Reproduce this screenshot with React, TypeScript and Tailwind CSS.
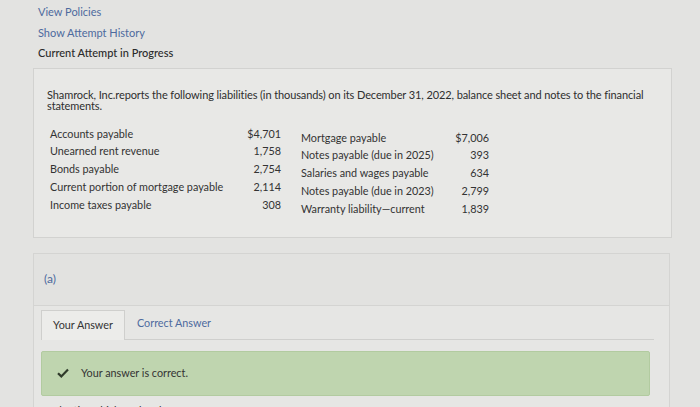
import React from 'react';

const left = [
  ['Accounts payable', '$4,701'],
  ['Unearned rent revenue', '1,758'],
  ['Bonds payable', '2,754'],
  ['Current portion of mortgage payable', '2,114'],
  ['Income taxes payable', '308'],
];

const right = [
  ['Mortgage payable', '$7,006'],
  ['Notes payable (due in 2025)', '393'],
  ['Salaries and wages payable', '634'],
  ['Notes payable (due in 2023)', '2,799'],
  ['Warranty liability\u2014current', '1,839'],
];

export default function App() {
  return (
    <div
      className="w-[700px] h-[407px] overflow-hidden bg-[#e3e3e1] text-[#3a3a3a]"
      style={{ fontFamily: 'Lato, "Open Sans", sans-serif' }}
    >
      <div className="pl-[38px] pt-[2px] text-[11px] leading-[20.5px]">
        <div className="text-[#4d6a9e]">View Policies</div>
        <div className="text-[#4d6a9e]">Show Attempt History</div>
        <div className="text-[#2a2a2a] font-medium">Current Attempt in Progress</div>
      </div>

      <div className="ml-[33px] mr-[28px] mt-[4px] h-[170px] border border-[#d2d2d0] bg-[#e8e8e6] px-[13px] pt-[20px]">
        <p className="text-[11px] leading-[11px] text-[#2e2e2e] tracking-[-0.1px]">
          Shamrock, Inc.reports the following liabilities (in thousands) on its December 31, 2022, balance sheet and notes to the financial statements.
        </p>
        <div className="flex mt-[14px] pl-[3px] text-[10.8px] leading-[17.8px] text-[#333]">
          <div className="w-[181px]">
            {left.map(([l]) => <div key={l}>{l}</div>)}
          </div>
          <div className="w-[50px] text-right">
            {left.map(([l, v]) => <div key={l}>{v}</div>)}
          </div>
          <div className="w-[152px] pl-[20px] pt-[4px]">
            {right.map(([l]) => <div key={l} className="whitespace-nowrap">{l}</div>)}
          </div>
          <div className="w-[56px] text-right pt-[4px]">
            {right.map(([l, v]) => <div key={l}>{v}</div>)}
          </div>
        </div>
      </div>

      <div className="ml-[33px] mr-[30px] mt-[15px] border border-[#d4d4d2] bg-[#e6e6e4]">
        <div className="h-[52px] flex items-center pl-[10px] border-b border-[#d4d4d2] bg-[#e2e2e0]">
          <span className="text-[12px] text-[#4d6a9e]">(a)</span>
        </div>
        <div className="px-[7px] pt-[3px]">
          <div className="flex items-end border-b border-[#cfcfcd] mr-[8px]">
            <div className="w-[84px] h-[30px] flex items-center justify-center border border-b-0 border-[#cfcfcd] bg-[#ececea] text-[10.8px] text-[#333] -mb-px">
              Your Answer
            </div>
            <div className="h-[30px] flex items-center pl-[12px] text-[10.8px] text-[#4d6a9e]">
              Correct Answer
            </div>
          </div>
          <div className="mt-[11px] mr-[12px] h-[45px] bg-[#bfd5af] border border-[#b2cba0] rounded-[2px] flex items-center pl-[15px]">
            <svg width="12" height="10" viewBox="0 0 12 10" className="mr-[12px]">
              <path d="M1 5.2 L4.3 8.4 L11 1.6" fill="none" stroke="#2f3a2a" strokeWidth="2.2" />
            </svg>
            <span className="text-[10.8px] text-[#333]">Your answer is correct.</span>
          </div>
          <div className="pt-[7px] text-[10.8px] text-[#333] pl-[12px]">Identify which of the above</div>
        </div>
      </div>
    </div>
  );
}
